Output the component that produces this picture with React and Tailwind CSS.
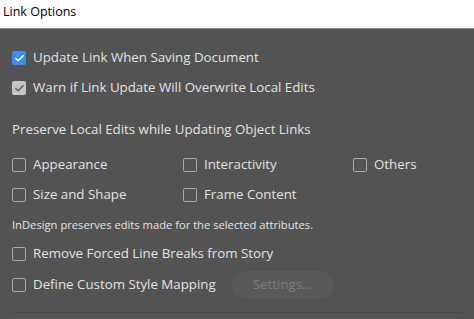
import { Check } from 'lucide-react';

const FONT = { fontFamily: '"Open Sans", "Noto Sans", sans-serif' };

// Small checkbox matching the dark InDesign dialog look
const Box = ({ state }) => {
  if (state === 'blue') {
    return (
      <span className="flex h-[14px] w-[14px] shrink-0 items-center justify-center rounded-[2px] bg-[#3b8eea]">
        <Check size={11} strokeWidth={3} className="text-white" />
      </span>
    );
  }
  if (state === 'gray') {
    return (
      <span className="flex h-[14px] w-[14px] shrink-0 items-center justify-center rounded-[2px] bg-[#c6c6c6]">
        <Check size={11} strokeWidth={3} className="text-[#5a5a5a]" />
      </span>
    );
  }
  return <span className="h-[14px] w-[14px] shrink-0 rounded-[2px] border border-[#a9a9a9]" />;
};

const Option = ({ label, state, className = '' }) => (
  <label className={`flex h-[30px] items-center gap-[7px] text-[13.3px] leading-none text-[#e2e2e2] ${className}`}>
    <Box state={state} />
    <span>{label}</span>
  </label>
);

export default function App() {
  return (
    <div className="flex h-[319px] w-[474px] flex-col overflow-hidden" style={FONT}>
      {/* Title bar */}
      <div className="h-[29px] border-b border-[#8a8a8a] bg-white px-[3px] pt-[3px] text-[12.5px] leading-[18px] text-black">
        Link Options
      </div>

      {/* Dialog body */}
      <div className="flex flex-1 flex-col bg-[#535353] px-[12px] pt-[14px]">
        <Option label="Update Link When Saving Document" state="blue" />
        <Option label="Warn if Link Update Will Overwrite Local Edits" state="gray" />

        <div className="mt-[12px] flex h-[30px] items-center text-[13.3px] text-[#e2e2e2]">
          Preserve Local Edits while Updating Object Links
        </div>

        <div className="mt-[5px] grid grid-cols-[171px_170px_1fr]">
          <Option label="Appearance" />
          <Option label="Interactivity" />
          <Option label="Others" />
          <Option label="Size and Shape" />
          <Option label="Frame Content" />
        </div>

        <div className="mt-[1px] flex h-[28px] items-center text-[11.2px] text-[#e2e2e2]">
          InDesign preserves edits made for the selected attributes.
        </div>

        <Option label="Remove Forced Line Breaks from Story" className="h-[28px]" />

        <div className="mt-[1px] flex items-center">
          <Option label="Define Custom Style Mapping" />
          <button className="ml-[16px] h-[28px] w-[102px] rounded-full bg-[#595959] text-[13.3px] text-[#7c7c7c]">
            Settings...
          </button>
        </div>

        <div className="mt-auto mb-[6px] border-t border-[#4a4a4a]" />
      </div>
    </div>
  );
}
